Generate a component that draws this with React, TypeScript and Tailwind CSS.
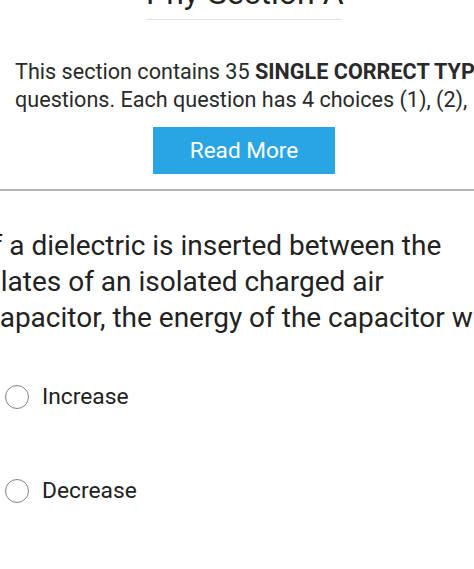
import { } from 'react';

const options = [
  { label: 'Increase', gap: 'mt-0' },
  { label: 'Decrease', gap: 'mt-[70px]' },
  { label: 'Remain same', gap: 'mt-[67px]' },
];

export default function App() {
  return (
    <div
      className="w-[474px] h-[569px] overflow-hidden bg-white text-[#222]"
      style={{ fontFamily: 'Roboto, "Noto Sans", sans-serif' }}
    >
      {/* section title, cut off by the top edge */}
      <div className="flex justify-center -mt-[27px] pl-[14px]">
        <div className="w-[196px] border-b border-[#e2e2e2] pb-[6px] text-center text-[32px] leading-[40px] text-[#222] whitespace-nowrap">
          Phy-Section A
        </div>
      </div>

      <div className="pl-[15px] pt-[38px] text-[21.6px] leading-[28px] text-[#2a2a2a] whitespace-nowrap">
        <div>
          This section contains 35 <span className="font-bold">SINGLE CORRECT TYPE</span>
        </div>
        <div>questions. Each question has 4 choices (1), (2),</div>
      </div>

      <div className="flex justify-center pt-[13px] pl-[14px]">
        <button className="w-[182px] h-[47px] bg-[#29a5e3] text-white text-[22.6px]">Read More</button>
      </div>

      <div className="mt-[15px] h-[2px] bg-[#b4b4b4]" />

      <div className="ml-[-15px] pt-[37px] text-[28px] leading-[36px] text-[#222] whitespace-nowrap">
        <div>If a dielectric is inserted between the</div>
        <div>plates of an isolated charged air</div>
        <div>capacitor, the energy of the capacitor will</div>
      </div>

      <div className="pt-[49px] flex flex-col">
        {options.map((o) => (
          <div key={o.label} className={`flex items-center gap-[13px] pl-[5px] h-[24px] ${o.gap}`}>
            <div className="w-[24px] h-[24px] rounded-full border-[1.5px] border-[#808080] shrink-0" />
            <span className="text-[22.8px] text-[#222]">{o.label}</span>
          </div>
        ))}
      </div>
    </div>
  );
}
